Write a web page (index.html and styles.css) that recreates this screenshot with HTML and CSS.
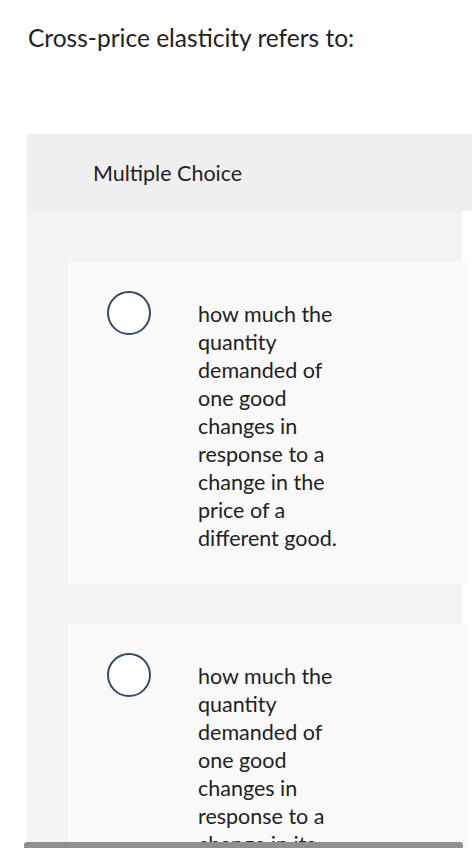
FILE: index.html
```html
<!DOCTYPE html>
<html lang="en">
<head>
<meta charset="utf-8">
<title>Cross-price elasticity</title>
<link rel="stylesheet" href="styles.css">
</head>
<body>
<main class="page">
  <h1 class="prompt">Cross-price elasticity refers to:</h1>
  <section class="question">
    <header class="question-head">Multiple Choice</header>
    <div class="question-body">
      <label class="choice">
        <span class="radio"></span>
        <span class="choice-text">how much the quantity demanded of one good changes in response to a change in the price of a different good.</span>
      </label>
      <label class="choice">
        <span class="radio"></span>
        <span class="choice-text">how much the quantity demanded of one good changes in response to a change in its price.</span>
      </label>
    </div>
  </section>
</main>
<div class="scrollbar"></div>
</body>
</html>
```
FILE: styles.css
```css
html, body {
  margin: 0;
  padding: 0;
  background: #ffffff;
}

body {
  font-family: Lato, "Open Sans", Arial, sans-serif;
  color: #222222;
  overflow: hidden;
  height: 848px;
}

.page {
  display: flex;
  flex-direction: column;
}

.prompt {
  margin: 0;
  padding: 22px 0 0 28px;
  height: 134px;
  box-sizing: border-box;
  font-size: 24.5px;
  font-weight: 400;
  line-height: 32px;
  color: #222222;
}

.question {
  margin-left: 27px;
  display: flex;
  flex-direction: column;
}

.question-head {
  width: 445px;
  height: 77px;
  box-sizing: border-box;
  background: #efefef;
  padding: 25px 0 0 66px;
  font-size: 21.5px;
  line-height: 28px;
  color: #222222;
}

.question-body {
  width: 435px;
  background: #f3f3f3;
  padding: 51px 0 0 41px;
  box-sizing: border-box;
  display: flex;
  flex-direction: column;
  gap: 40px;
}

.choice {
  width: 400px;
  background: #f9f9f9;
  display: flex;
  align-items: flex-start;
  padding: 38px 0 32px 39px;
  box-sizing: border-box;
}

.radio {
  flex: none;
  width: 44px;
  height: 44px;
  margin-top: -9px;
  border: 2px solid #2d4b6b;
  border-radius: 50%;
  box-sizing: border-box;
  background: #ffffff;
}

.choice-text {
  margin-left: 47px;
  width: 152px;
  font-size: 21.5px;
  line-height: 28px;
  color: #222222;
}

.scrollbar {
  position: fixed;
  left: 24px;
  bottom: 0;
  width: 439px;
  height: 6px;
  border-radius: 3px 3px 0 0;
  background: #8f8f8f;
}
```
